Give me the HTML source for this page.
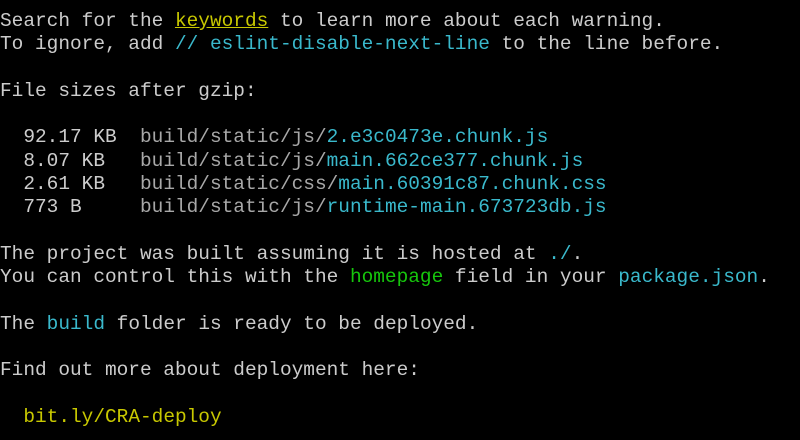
<!DOCTYPE html>
<html><head><style>
html,body{margin:0;padding:0;background:#000;width:800px;height:440px;overflow:hidden}
pre{margin:0;position:absolute;left:0;top:10px;font-family:"Liberation Mono",monospace;font-size:19.45px;line-height:23.3px;color:#cccccc;white-space:pre}
.c{color:#3ab9cc}.y{color:#c8c800}.g{color:#16c60c}.d{color:#a8a8a8}
.u{text-decoration:underline}
</style></head><body><pre>Search for the <span class="y u">keywords</span> to learn more about each warning.
To ignore, add <span class="c">// eslint-disable-next-line</span> to the line before.

File sizes after gzip:

  92.17 KB  <span class="d">build/static/js/</span><span class="c">2.e3c0473e.chunk.js</span>
  8.07 KB   <span class="d">build/static/js/</span><span class="c">main.662ce377.chunk.js</span>
  2.61 KB   <span class="d">build/static/css/</span><span class="c">main.60391c87.chunk.css</span>
  773 B     <span class="d">build/static/js/</span><span class="c">runtime-main.673723db.js</span>

The project was built assuming it is hosted at <span class="c">./</span>.
You can control this with the <span class="g">homepage</span> field in your <span class="c">package.json</span>.

The <span class="c">build</span> folder is ready to be deployed.

Find out more about deployment here:

  <span class="y">bit.ly/CRA-deploy</span>
</pre></body></html>
